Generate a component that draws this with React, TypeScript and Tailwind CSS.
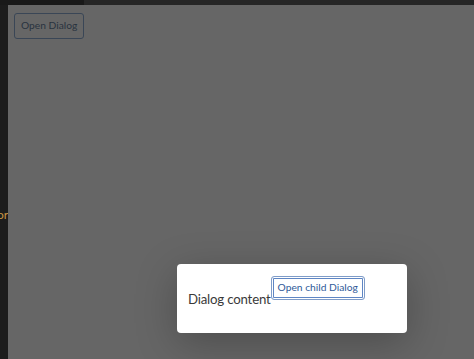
export default function App() {
  return (
    <div className="relative flex h-[359px] w-[474px] flex-col overflow-hidden bg-[#1b1b1b] font-['Lato',sans-serif]">
      {/* top chrome */}
      <div className="flex h-[5px] shrink-0">
        <div className="w-[84px] bg-[#191919]" />
        <div className="flex-1 bg-[#262626]" />
      </div>
      <div className="flex flex-1">
        {/* left sidebar edge */}
        <div className="relative w-[8px] shrink-0 overflow-hidden bg-[#1c1c1c]">
          <span className="absolute left-[-3px] top-[201px] text-[12px] text-[#c89443]">or</span>
        </div>
        {/* dimmed page */}
        <div className="flex-1 bg-[#666666] pl-[6px] pt-[6px]">
          <button className="h-[26px] rounded-[3px] border border-[#3a4656] px-[6px] text-[10.25px] text-[#29333f]">
            Open Dialog
          </button>
        </div>
      </div>

      {/* modal */}
      <div className="absolute left-[177px] top-[264px] flex h-[69px] w-[230px] items-start rounded-[4px] bg-white pl-[11px] pt-[12px] shadow-[0_10px_40px_rgba(0,0,0,0.25)]">
        <span className="mt-[14px] text-[13.25px] leading-[19px] tracking-[-0.2px] text-[#3a3a3a]">Dialog content</span>
        <button className="h-[24px] rounded-[3px] border border-[#7f9cc8] px-[6px] text-[10.25px] text-[#2f5a99] shadow-[inset_0_0_0_1px_#ffffff,inset_0_0_0_2px_#5f86c4]">
          Open child Dialog
        </button>
      </div>
    </div>
  );
}
